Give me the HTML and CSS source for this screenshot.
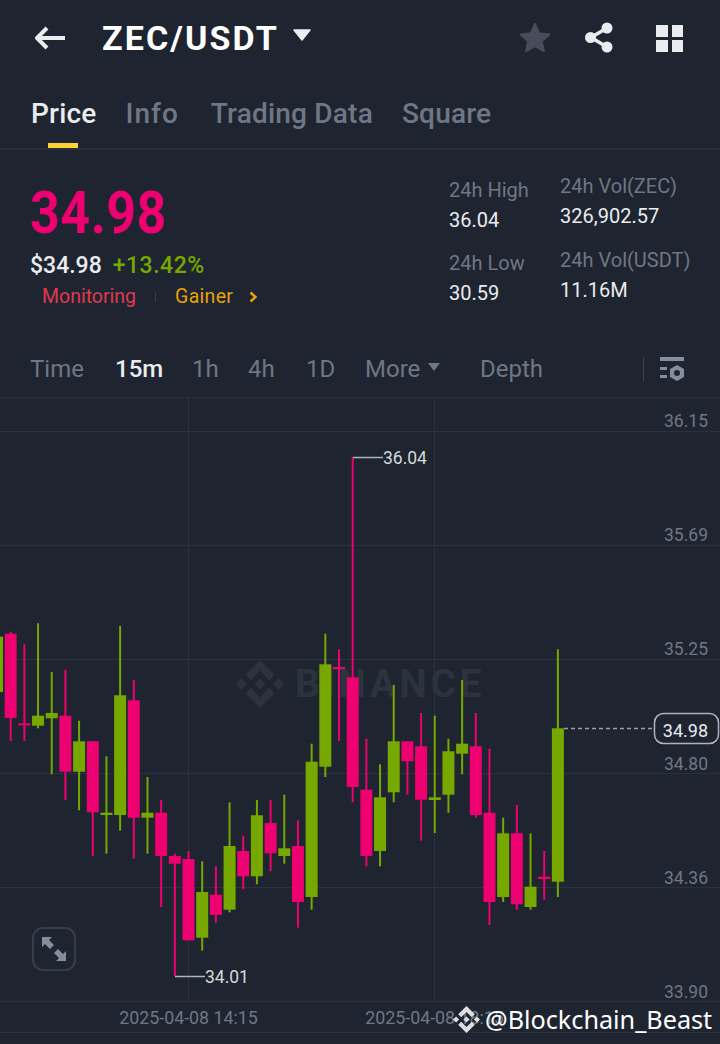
FILE: index.html
```html
<!DOCTYPE html>
<html lang="en">

<head>
    <meta charset="UTF-8">
    <meta name="viewport" content="width=device-width, initial-scale=1.0">
    <title>ZEC/USDT</title>
    <link rel="stylesheet" href="styles.css">
</head>

<body>
    <svg class="defs" width="0" height="0">
        <symbol id="bnb" viewBox="0 0 126.61 126.61">
            <path d="M38.73 53.2l24.59-24.58 24.6 24.6 14.3-14.31L63.32 0 24.43 38.9z" />
            <path d="M0 63.31l14.3-14.31 14.31 14.31-14.31 14.3z" />
            <path d="M38.73 73.41l24.59 24.59 24.6-24.6 14.31 14.29-38.9 38.91-38.91-38.88z" />
            <path d="M98 63.31l14.3-14.31 14.31 14.3-14.31 14.31z" />
            <path d="M77.83 63.3L63.32 48.78 52.59 59.51l-1.24 1.23-2.54 2.54 14.51 14.5 14.51-14.47z" />
        </symbol>
    </svg>

    <div class="app">
        <header class="topbar">
            <svg class="back" width="32" height="26" viewBox="0 0 32 26">
                <path d="M3 13H31M13 3L3 13L13 23" />
            </svg>
            <span class="pair">ZEC/USDT</span>
            <svg class="caret" width="20" height="13" viewBox="0 0 20 13">
                <path d="M2 1H18L10 11Z" />
            </svg>
            <div class="actions">
                <svg class="star" width="32" height="32" viewBox="0 0 32 32">
                    <path d="M16 2L20.2 11.3L30.3 12.4L22.8 19.2L24.9 29.2L16 24.1L7.1 29.2L9.2 19.2L1.7 12.4L11.8 11.3Z" />
                </svg>
                <svg class="share" width="30" height="32" viewBox="0 0 30 32">
                    <path d="M23 6L7 15.5L23 25" />
                    <circle cx="23" cy="6" r="5.5" />
                    <circle cx="6.500" cy="15.500" r="5.5" />
                    <circle cx="23" cy="25" r="5.5" />
                </svg>
                <div class="grid-icon"><i></i><i></i><i></i><i></i></div>
            </div>
        </header>

        <nav class="tabs">
            <a class="tab active">Price</a>
            <a class="tab tab-info">Info</a>
            <a class="tab">Trading Data</a>
            <a class="tab">Square</a>
        </nav>

        <section class="stats">
            <div class="quote">
                <div class="last">34.98</div>
                <div class="change-row">
                    <span class="usd">$34.98</span>
                    <span class="change">+13.42%</span>
                </div>
                <div class="tag-row">
                    <span class="tag-red">Monitoring</span>
                    <span class="tag-sep"></span>
                    <span class="tag-gold">Gainer</span>
                    <svg class="chevron" width="10" height="12" viewBox="0 0 10 12">
                        <path d="M2.500 1.500L7.500 6L2.500 10.500" />
                    </svg>
                </div>
            </div>
            <div class="figures figures-a">
                <div class="figure">
                    <span class="fig-label">24h High</span>
                    <span class="fig-value">36.04</span>
                </div>
                <div class="figure">
                    <span class="fig-label">24h Low</span>
                    <span class="fig-value">30.59</span>
                </div>
            </div>
            <div class="figures figures-b">
                <div class="figure">
                    <span class="fig-label">24h Vol(ZEC)</span>
                    <span class="fig-value">326,902.57</span>
                </div>
                <div class="figure">
                    <span class="fig-label">24h Vol(USDT)</span>
                    <span class="fig-value">11.16M</span>
                </div>
            </div>
        </section>

        <div class="intervals">
            <span class="iv iv-time">Time</span>
            <span class="iv iv-15m active">15m</span>
            <span class="iv iv-1h">1h</span>
            <span class="iv iv-4h">4h</span>
            <span class="iv iv-1d">1D</span>
            <span class="iv iv-more">More</span>
            <svg class="more-caret" width="14" height="10" viewBox="0 0 14 10">
                <path d="M1 1H13L7 9Z" />
            </svg>
            <span class="iv iv-depth">Depth</span>
            <span class="iv-sep"></span>
            <svg class="chart-settings" width="24" height="24" viewBox="0 0 24 24">
                <path d="M0 0H24V4H0ZM0 10H7V13H0ZM0 18H7V21H0Z" />
                <path fill-rule="evenodd" d="M17 8L24 12V20L17 24L10 20V12ZM17 13A3 3 0 1 0 17 19A3 3 0 1 0 17 13Z" />
            </svg>
        </div>

        <div class="chart-wrap">
            <svg class="chart" id="chart" width="720" height="646" viewBox="0 398 720 646">
                <g class="grid">
                    <path d="M0 431.500H720M0 545.500H720M0 659.500H720M0 773.500H720M0 887.500H720M0 1001.500H720M0 1032.500H720" />
                    <path d="M188.500 398V1001M434.500 398V1001" />
                </g>
                <use href="#bnb" class="mark-logo" x="236" y="660" width="48" height="48" />
                <text class="mark-text" x="295" y="697">BINANCE</text>
                <g id="candles"></g>
                <g class="prices">
                    <text x="708" y="427">36.15</text>
                    <text x="708" y="541">35.69</text>
                    <text x="708" y="655">35.25</text>
                    <text x="708" y="770">34.80</text>
                    <text x="708" y="884">34.36</text>
                    <text x="708" y="998">33.90</text>
                </g>
                <g class="times">
                    <text x="188.500" y="1024">2025-04-08 14:15</text>
                    <text x="434.500" y="1024">2025-04-08 18:15</text>
                </g>
                <g class="extreme">
                    <path d="M353 457.500H383M175 976.500H205" />
                    <text x="383" y="464">36.04</text>
                    <text x="205" y="983">34.01</text>
                </g>
                <path class="last-line" d="M564 728.500H654" />
                <rect class="last-box" x="654.500" y="713.500" width="64" height="30" rx="9" />
                <text class="last-text" x="708" y="737">34.98</text>
            </svg>

            <button class="expand">
                <svg width="26" height="26" viewBox="0 0 26 26">
                    <path d="M1 1H11L8 4L13 9L9 13L4 8L1 11ZM25 25H15L18 22L13 17L17 13L22 18L25 15Z" />
                </svg>
            </button>

            <div class="credit">
                <svg class="credit-logo" width="27" height="27">
                    <use href="#bnb" width="27" height="27" />
                </svg>
                <span>@Blockchain_Beast</span>
            </div>
        </div>
    </div>

    <script src="chart.js"></script>
</body>

</html>
```

FILE: styles.css
```css
* {
    box-sizing: border-box;
}

body {
    margin: 0;
    background-color: #1e2530;
    font-family: Roboto, "Noto Sans", sans-serif;
    overflow: hidden;
}

.defs {
    position: absolute;
}

.app {
    width: 720px;
    height: 1044px;
    overflow: hidden;
}

/* top bar */
.topbar {
    height: 76px;
    display: flex;
    align-items: center;
    padding: 0 37px 0 34px;
}

.back {
    fill: none;
    stroke: #eaecef;
    stroke-width: 4;
    stroke-linejoin: round;
    margin-right: 36px;
}

.pair {
    color: #fff;
    font-size: 34px;
    font-weight: 700;
    letter-spacing: 2.1px;
    margin-right: 13px;
}

.caret {
    fill: #eaecef;
    stroke: #eaecef;
    stroke-linejoin: round;
    stroke-width: 1.5;
    margin-top: -6px;
}

.actions {
    margin-left: auto;
    display: flex;
    align-items: center;
}

.star {
    fill: #474d5a;
    stroke: #474d5a;
    stroke-linejoin: round;
    stroke-width: 2;
    margin-right: 33px;
}

.share {
    fill: #eaecef;
    margin-right: 42px;
}

.share path {
    fill: none;
    stroke: #eaecef;
    stroke-width: 3.5;
}

.grid-icon {
    width: 27px;
    height: 27px;
    display: grid;
    grid-template-columns: 11.5px 11.5px;
    grid-template-rows: 12px 12px;
    gap: 3px 4px;
}

.grid-icon i {
    background-color: #eaecef;
}

/* tabs */
.tabs {
    height: 74px;
    display: flex;
    gap: 29px;
    padding: 21px 0 0 31px;
    border-bottom: 2px solid #282f3a;
    font-size: 28px;
    font-weight: 500;
    color: #6f7785;
    letter-spacing: 0.2px;
}

.tab {
    position: relative;
}

.tab-info {
    letter-spacing: 1px;
    margin-right: 3px;
}

.tab.active {
    color: #eaecef;
}

.tab.active::after {
    content: "";
    position: absolute;
    left: 17px;
    bottom: 0;
    width: 30px;
    height: 5px;
    background-color: #fcd535;
}

/* price block */
.stats {
    height: 190px;
    display: flex;
    position: relative;
}

.quote {
    width: 449px;
    padding: 30px 0 0 30px;
}

.last {
    color: #ed0070;
    font-size: 52px;
    font-weight: 700;
    line-height: 68px;
    letter-spacing: 0.5px;
    transform: scaleY(1.13);
}

.change-row {
    margin-top: 4px;
    display: flex;
    gap: 11px;
    font-size: 23px;
    font-weight: 500;
    line-height: 28px;
}

.usd {
    color: #eaecef;
}

.change {
    color: #76a800;
    letter-spacing: 0.5px;
}

.tag-row {
    margin-top: 3px;
    padding-left: 12px;
    display: flex;
    align-items: center;
    font-size: 19.5px;
    line-height: 28px;
}

.tag-red {
    color: #e0394f;
}

.tag-sep {
    width: 1px;
    height: 10px;
    margin: 0 19px;
    background-color: #3a404c;
}

.tag-gold {
    color: #e6a00f;
    letter-spacing: 0.3px;
}

.chevron {
    margin-left: 15px;
    fill: none;
    stroke: #e6a00f;
    stroke-width: 2.5;
}

.figures {
    display: flex;
    flex-direction: column;
    gap: 19px;
}

.figures-a {
    width: 111px;
    padding-top: 28px;
}

.figures-b {
    padding-top: 24px;
    gap: 20px;
}

.figure {
    display: flex;
    flex-direction: column;
    gap: 6px;
}

.fig-label {
    color: #6f7785;
    font-size: 20px;
    line-height: 24px;
}

.fig-value {
    color: #eaecef;
    font-size: 20px;
    line-height: 24px;
}

/* interval row */
.intervals {
    height: 58px;
    display: flex;
    align-items: center;
    padding-left: 30px;
    border-bottom: 1px solid #282f3a;
    font-size: 24px;
    color: #6f7785;
}

.iv.active {
    color: #eaecef;
    font-weight: 500;
}

.iv-time {
    width: 85px;
}

.iv-15m {
    width: 77px;
}

.iv-1h {
    width: 56px;
}

.iv-4h {
    width: 58px;
}

.iv-1d {
    width: 59px;
}

.iv-more {
    width: 62px;
}

.more-caret {
    fill: #6f7785;
    margin-top: -4px;
}

.iv-depth {
    margin-left: 39px;
    width: 163px;
}

.iv-sep {
    width: 1px;
    height: 24px;
    background-color: #3a404c;
    margin-right: 16px;
}

.chart-settings {
    fill: #848e9c;
}

/* chart */
.chart-wrap {
    position: relative;
    height: 646px;
}

.chart {
    display: block;
}

.grid path {
    fill: none;
    stroke: #2b323d;
    stroke-width: 1;
}

.mark-logo {
    fill: #2c333e;
}

.mark-text {
    fill: #2c333e;
    font-size: 39px;
    font-weight: 700;
    letter-spacing: 3.5px;
}

.wick-up,
.wick-down {
    stroke-width: 2;
}

.wick-up {
    stroke: #76a800;
}

.wick-down {
    stroke: #ed0070;
}

.body-up {
    fill: #76a800;
}

.body-down {
    fill: #ed0070;
}

.prices text {
    fill: #6f7785;
    font-size: 17.5px;
    text-anchor: end;
}

.times text {
    fill: #6f7785;
    font-size: 17.8px;
    text-anchor: middle;
}

.extreme path {
    fill: none;
    stroke: #aeb4bc;
    stroke-width: 1.5;
}

.extreme text {
    fill: #d5d8dc;
    font-size: 17.5px;
}

.last-line {
    stroke: #9aa0a8;
    stroke-width: 1.5;
    stroke-dasharray: 4 3;
}

.last-box {
    fill: #1e2530;
    stroke: #aeb4bc;
    stroke-width: 1.5;
}

.last-text {
    fill: #eaecef;
    font-size: 18px;
    text-anchor: end;
}

.expand {
    position: absolute;
    left: 32px;
    top: 529px;
    width: 44px;
    height: 44px;
    padding: 0;
    display: flex;
    align-items: center;
    justify-content: center;
    background: none;
    border: 2px solid #363c48;
    border-radius: 11px;
}

.expand svg {
    fill: #848e9c;
}

.credit {
    position: absolute;
    left: 453px;
    top: 606px;
    display: flex;
    align-items: center;
    gap: 5px;
    color: #fff;
    font-family: "Noto Sans", sans-serif;
    font-size: 25.2px;
    line-height: 30px;
    white-space: nowrap;
}

.credit-logo {
    fill: #dcdee2;
}
```

FILE: chart.js
```javascript
// wick top, body top, body bottom, wick bottom (svg y), up?
const candles = [
    [630, 636.7, 692, 700, 1],
    [631.7, 633.7, 718, 741, 0],
    [644.3, 723.3, 725.3, 741, 0],
    [623.3, 715.7, 725.7, 728.3, 1],
    [672, 713, 718.3, 774.3, 1],
    [669.7, 715.7, 771.7, 800, 0],
    [720.7, 741.3, 771.7, 810.3, 1],
    [741.3, 741.3, 812.3, 856, 0],
    [756.3, 812.7, 815, 853.7, 1],
    [626, 695.3, 815, 830.7, 1],
    [680, 700.3, 817.7, 858.7, 0],
    [777, 812.7, 817.7, 853.7, 1],
    [800, 812.7, 856, 907, 0],
    [853.7, 856, 863.7, 976, 0],
    [851.3, 859, 940.3, 940.3, 0],
    [861.3, 892, 937.7, 950.7, 1],
    [866.3, 894.7, 915, 922.7, 0],
    [802.3, 846, 909.7, 912.3, 1],
    [835.7, 851, 876.3, 889.3, 0],
    [800, 815.3, 876.3, 884.3, 1],
    [800, 823, 853.3, 871.3, 0],
    [794.7, 848.3, 856, 863.7, 1],
    [820.3, 846, 902, 927.7, 0],
    [743.7, 761.7, 897, 909.7, 1],
    [633.7, 664.3, 766.7, 777, 1],
    [649.3, 667, 669.3, 741, 0],
    [457, 677.3, 787, 802.3, 0],
    [738.7, 789.7, 856, 866.3, 0],
    [764.3, 797.3, 851, 866.3, 1],
    [685, 741.3, 792.3, 802.3, 1],
    [741.3, 741.3, 761.3, 794.7, 0],
    [713, 746.3, 799.7, 840.7, 0],
    [715.7, 797.3, 800, 833, 1],
    [738.7, 751.3, 794.7, 812.7, 1],
    [680, 743.7, 753.7, 774.3, 1],
    [713, 746.3, 815, 817.7, 0],
    [748.7, 812.7, 902, 925, 0],
    [817.7, 833.3, 897, 902, 1],
    [805, 833.3, 904.3, 909.7, 0],
    [833.3, 886.7, 907, 909.7, 1],
    [851, 876.7, 879, 899.7, 0],
    [649.3, 728.3, 881.7, 897, 1]
];

const SVG_NS = 'http://www.w3.org/2000/svg';
const group = document.getElementById('candles');
const step = 13.68;
const startX = -3;
const bodyWidth = 12;

candles.forEach(function (c, i) {
    const x = startX + i * step;
    const side = c[4] ? 'up' : 'down';

    const wick = document.createElementNS(SVG_NS, 'line');
    wick.setAttribute('x1', x);
    wick.setAttribute('x2', x);
    wick.setAttribute('y1', c[0]);
    wick.setAttribute('y2', c[3]);
    wick.setAttribute('class', 'wick-' + side);
    group.appendChild(wick);

    const body = document.createElementNS(SVG_NS, 'rect');
    body.setAttribute('x', x - bodyWidth / 2);
    body.setAttribute('y', c[1]);
    body.setAttribute('width', bodyWidth);
    body.setAttribute('height', c[2] - c[1]);
    body.setAttribute('class', 'body-' + side);
    group.appendChild(body);
});
```
